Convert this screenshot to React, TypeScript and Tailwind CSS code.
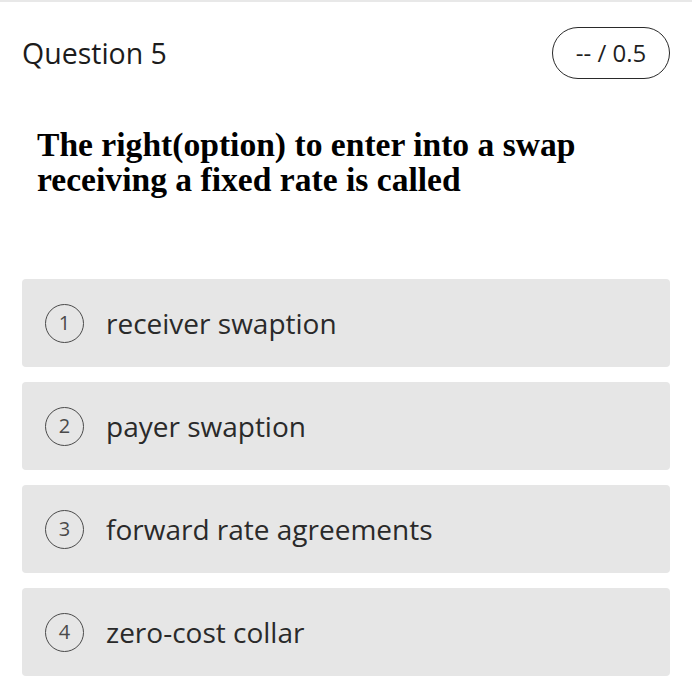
import React from "react";

const options = [
  "receiver swaption",
  "payer swaption",
  "forward rate agreements",
  "zero-cost collar",
];

export default function App() {
  return (
    <div className="w-[692px] h-[700px] bg-white border-t-2 border-[#e8e8e8] overflow-hidden" style={{ fontFamily: '"Open Sans", sans-serif' }}>
      <div className="px-[22px] pt-[25px]">
        <div className="flex items-center justify-between h-[52px]">
          <div className="text-[28.5px] leading-none text-[#1c1c1c] font-medium">Question 5</div>
          <div className="w-[118px] h-[52px] rounded-full border-[1.5px] border-[#2a2a2a] flex items-center justify-center text-[24px] leading-none text-[#1f1f1f]">
            -- / 0.5
          </div>
        </div>
        <div
          className="mt-[48px] pl-[15px] text-[33.6px] leading-[35px] font-bold text-black"
          style={{ fontFamily: '"Liberation Serif", serif' }}
        >
          The right(option) to enter into a swap
          <br />
          receiving a fixed rate is called
        </div>
        <div className="mt-[82px] flex flex-col gap-[15px]">
          {options.map((o, i) => (
            <div key={i} className="h-[88px] rounded-[4px] bg-[#e6e6e6] flex items-center pl-[23px]">
              <div className="w-[39px] h-[39px] rounded-full border-[1.5px] border-[#4a4a4a] flex items-center justify-center text-[20px] leading-none text-[#4a4a4a]">
                {i + 1}
              </div>
              <div className="ml-[22px] text-[28px] leading-none text-[#2a2a2a]">{o}</div>
            </div>
          ))}
        </div>
      </div>
    </div>
  );
}
